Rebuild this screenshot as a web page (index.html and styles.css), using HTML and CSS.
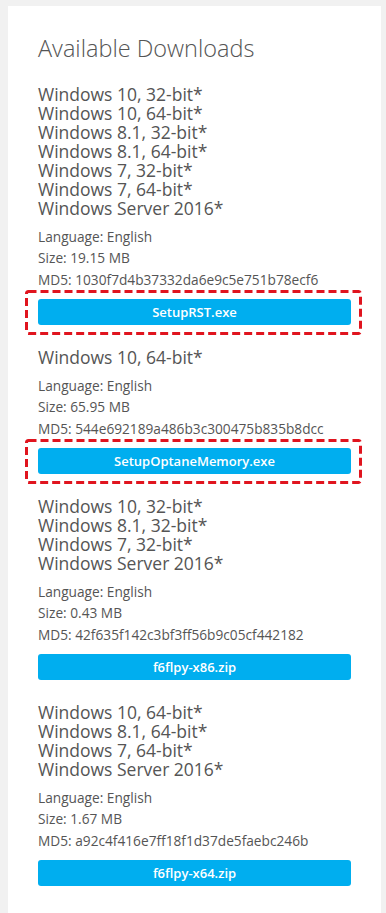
FILE: index.html
```html
<!DOCTYPE html>
<html lang="en">
<head>
    <meta charset="UTF-8">
    <meta name="viewport" content="width=device-width, initial-scale=1.0">
    <title>Available Downloads</title>
    <link rel="stylesheet" href="styles.css">
</head>
<body>
    <div class="panel">
        <h2>Available Downloads</h2>

        <div class="download">
            <ul class="os-list">
                <li>Windows 10, 32-bit*</li>
                <li>Windows 10, 64-bit*</li>
                <li>Windows 8.1, 32-bit*</li>
                <li>Windows 8.1, 64-bit*</li>
                <li>Windows 7, 32-bit*</li>
                <li>Windows 7, 64-bit*</li>
                <li>Windows Server 2016*</li>
            </ul>
            <div class="info">
                <p>Language: English</p>
                <p>Size: 19.15 MB</p>
                <p>MD5: 1030f7d4b37332da6e9c5e751b78ecf6</p>
            </div>
            <div class="marked">
                <svg class="dash" preserveAspectRatio="none"><rect x="1.5" y="1.5" width="calc(100% - 3px)" height="calc(100% - 3px)" rx="2"></rect></svg>
                <a class="btn" href="#">SetupRST.exe</a>
            </div>
        </div>

        <div class="download">
            <ul class="os-list">
                <li>Windows 10, 64-bit*</li>
            </ul>
            <div class="info">
                <p>Language: English</p>
                <p>Size: 65.95 MB</p>
                <p>MD5: 544e692189a486b3c300475b835b8dcc</p>
            </div>
            <div class="marked">
                <svg class="dash" preserveAspectRatio="none"><rect x="1.5" y="1.5" width="calc(100% - 3px)" height="calc(100% - 3px)" rx="2"></rect></svg>
                <a class="btn" href="#">SetupOptaneMemory.exe</a>
            </div>
        </div>

        <div class="download">
            <ul class="os-list">
                <li>Windows 10, 32-bit*</li>
                <li>Windows 8.1, 32-bit*</li>
                <li>Windows 7, 32-bit*</li>
                <li>Windows Server 2016*</li>
            </ul>
            <div class="info">
                <p>Language: English</p>
                <p>Size: 0.43 MB</p>
                <p>MD5: 42f635f142c3bf3ff56b9c05cf442182</p>
            </div>
            <a class="btn" href="#">f6flpy-x86.zip</a>
        </div>

        <div class="download">
            <ul class="os-list">
                <li>Windows 10, 64-bit*</li>
                <li>Windows 8.1, 64-bit*</li>
                <li>Windows 7, 64-bit*</li>
                <li>Windows Server 2016*</li>
            </ul>
            <div class="info">
                <p>Language: English</p>
                <p>Size: 1.67 MB</p>
                <p>MD5: a92c4f416e7ff18f1d37de5faebc246b</p>
            </div>
            <a class="btn" href="#">f6flpy-x64.zip</a>
        </div>
    </div>
</body>
</html>
```

FILE: styles.css
```css
body {
    margin: 0;
    background-color: #f1f1f1;
    font-family: "Open Sans", "DejaVu Sans", sans-serif;
    color: #555;
}
.panel {
    margin: 6px 5px 0 8px;
    padding: 27px 30px 30px 30px;
    background: white;
}
h2 {
    margin: 0;
    font-size: 23.5px;
    font-weight: 300;
    line-height: 30px;
    color: #555;
}
.download {
    margin-top: 22.5px;
}
.download:first-of-type {
    margin-top: 21.5px;
}
.os-list {
    list-style: none;
    margin: 0;
    padding: 0;
    font-size: 17.5px;
    line-height: 19px;
}
.info {
    margin-top: 8px;
    font-size: 13.7px;
    line-height: 21.5px;
}
.info p {
    margin: 0;
}
.btn {
    display: block;
    margin-top: 9px;
    height: 26px;
    line-height: 26px;
    background-color: #00aeef;
    border-radius: 3px;
    color: white;
    font-size: 13px;
    font-weight: 600;
    text-align: center;
    text-decoration: none;
}
.marked {
    position: relative;
    margin: 0 -11px -10px -13px;
    padding: 9px 11px 10px 13px;
}
.marked .btn {
    position: relative;
    margin-top: 0;
}
.dash {
    position: absolute;
    left: 0;
    top: 0;
    width: 100%;
    height: 100%;
    overflow: visible;
}
.dash rect {
    fill: none;
    stroke: #e0141e;
    stroke-width: 3;
    stroke-dasharray: 8 4;
}
```
